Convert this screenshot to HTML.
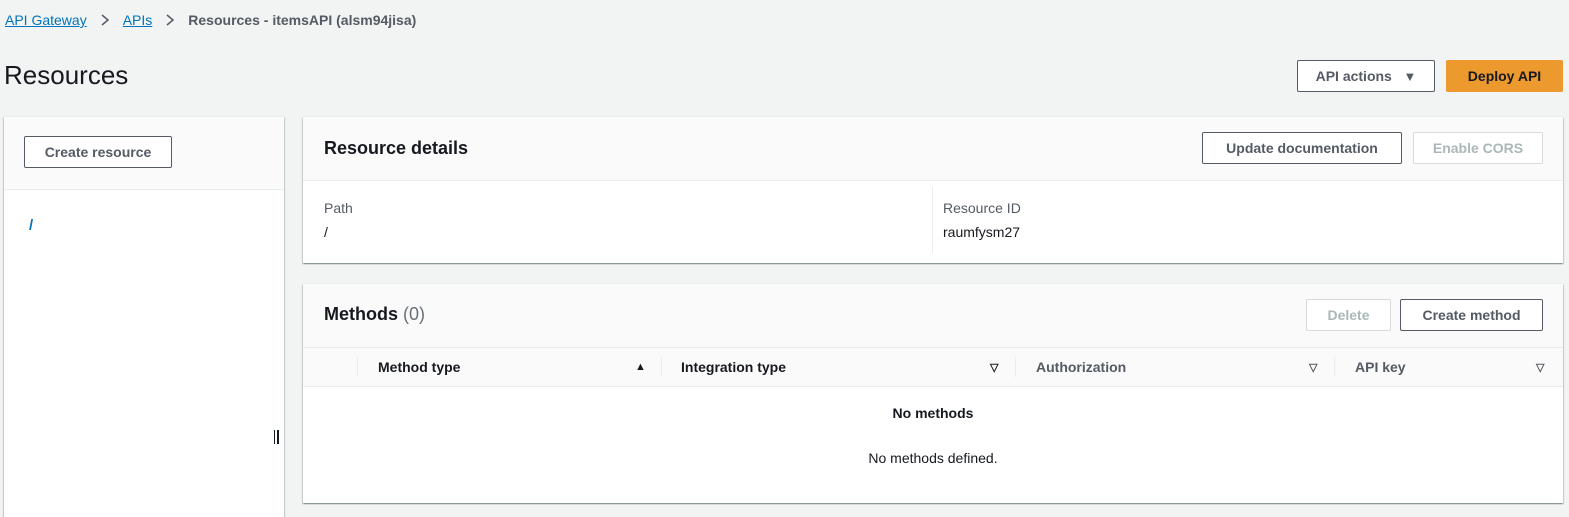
<!DOCTYPE html>
<html><head><style>
*{box-sizing:border-box;margin:0;padding:0}
body{width:1569px;height:509px;background:#f2f3f3;font-family:"Liberation Sans",sans-serif;color:#16191f;position:relative;overflow:hidden;font-size:14px}
.a{position:absolute}
.btn{position:absolute;border:1px solid #545b64;background:#fff;font-weight:bold;font-size:14px;color:#545b64;display:flex;align-items:center;justify-content:center;border-radius:2px}
.dis{border-color:#d5dbdb;color:#aab7b8}
.panel{position:absolute;background:#fff;box-shadow:0 1px 1px rgba(0,28,36,.3),1px 1px 1px rgba(0,28,36,.15),-1px 1px 1px rgba(0,28,36,.15),0 -1px 0 #eaeded}
.th{position:absolute;top:0;height:40px;display:flex;align-items:center;font-weight:bold;font-size:14px}
.sep{position:absolute;top:10px;width:1px;height:20px;background:#eaeded}
</style></head><body>
<div class="a" style="left:5px;top:12px;font-size:14px;color:#545b64;display:flex;align-items:center">
<span style="color:#0073bb;text-decoration:underline">API Gateway</span>
<svg width="36" height="16" viewBox="0 0 36 16"><path d="M15 3l6 5-6 5" fill="none" stroke="#545b64" stroke-width="1.5"/></svg>
<span style="color:#0073bb;text-decoration:underline">APIs</span>
<svg width="36" height="16" viewBox="0 0 36 16"><path d="M15 3l6 5-6 5" fill="none" stroke="#545b64" stroke-width="1.5"/></svg>
<b>Resources - itemsAPI (alsm94jisa)</b></div>
<div class="a" style="left:4px;top:60px;font-size:26px">Resources</div>
<div class="btn" style="left:1297px;top:60px;width:138px;height:32px">API actions&nbsp;&nbsp;&nbsp;<span style="font-size:13px">▼</span></div>
<div class="btn" style="left:1446px;top:60px;width:117px;height:32px;background:#ec992e;border-color:#ec992e;color:#16191f">Deploy API</div>

<div class="panel" style="left:4px;top:117px;width:280px;height:400px">
<div class="a" style="left:0;top:0;width:280px;height:73px;background:#fafafa;border-bottom:1px solid #eaeded"></div>
<div class="btn" style="left:20px;top:19px;width:148px;height:32px">Create resource</div>
<div class="a" style="left:25px;top:100px;color:#0073bb;font-weight:bold;font-size:15px">/</div>
<div class="a" style="left:270px;top:313px;height:14px;border-left:1px solid #16191f;border-right:2px solid #16191f;width:5px"></div>
</div>

<div class="panel" style="left:303px;top:117px;width:1260px;height:146px">
<div class="a" style="left:0;top:0;width:1260px;height:64px;background:#fafafa;border-bottom:1px solid #eaeded"></div>
<div class="a" style="left:21px;top:21px;font-size:18px;font-weight:bold">Resource details</div>
<div class="btn" style="left:899px;top:15px;width:200px;height:32px">Update documentation</div>
<div class="btn dis" style="left:1110px;top:15px;width:130px;height:32px">Enable CORS</div>
<div class="a" style="left:21px;top:83px;color:#545b64">Path</div>
<div class="a" style="left:21px;top:107px">/</div>
<div class="a" style="left:629px;top:70px;width:1px;height:66px;background:#eaeded"></div>
<div class="a" style="left:640px;top:83px;color:#545b64">Resource ID</div>
<div class="a" style="left:640px;top:107px">raumfysm27</div>
</div>

<div class="panel" style="left:303px;top:284px;width:1260px;height:219px">
<div class="a" style="left:0;top:0;width:1260px;height:103px;background:#fafafa"></div>
<div class="a" style="left:0;top:63px;width:1260px;height:1px;background:#eaeded"></div>
<div class="a" style="left:0;top:102px;width:1260px;height:1px;background:#eaeded"></div>
<div class="a" style="left:21px;top:20px;font-size:18px;font-weight:bold">Methods <span style="font-weight:normal;color:#687078">(0)</span></div>
<div class="btn dis" style="left:1003px;top:15px;width:85px;height:32px">Delete</div>
<div class="btn" style="left:1097px;top:15px;width:143px;height:32px">Create method</div>
<div class="a" style="left:0;top:63px;width:1260px;height:40px">
<div class="sep" style="left:54px"></div>
<div class="th" style="left:75px">Method type</div><div class="th" style="left:332px;font-size:11px">▲</div>
<div class="sep" style="left:358px"></div>
<div class="th" style="left:378px">Integration type</div><div class="th" style="left:687px;font-size:11px">▽</div>
<div class="sep" style="left:712px"></div>
<div class="th" style="left:733px;color:#545b64">Authorization</div><div class="th" style="left:1006px;font-size:11px;color:#545b64">▽</div>
<div class="sep" style="left:1031px"></div>
<div class="th" style="left:1052px;color:#545b64">API key</div><div class="th" style="left:1233px;font-size:11px;color:#545b64">▽</div>
</div>
<div class="a" style="left:0;top:121px;width:1260px;text-align:center;font-weight:bold">No methods</div>
<div class="a" style="left:0;top:166px;width:1260px;text-align:center">No methods defined.</div>
</div>
</body></html>
